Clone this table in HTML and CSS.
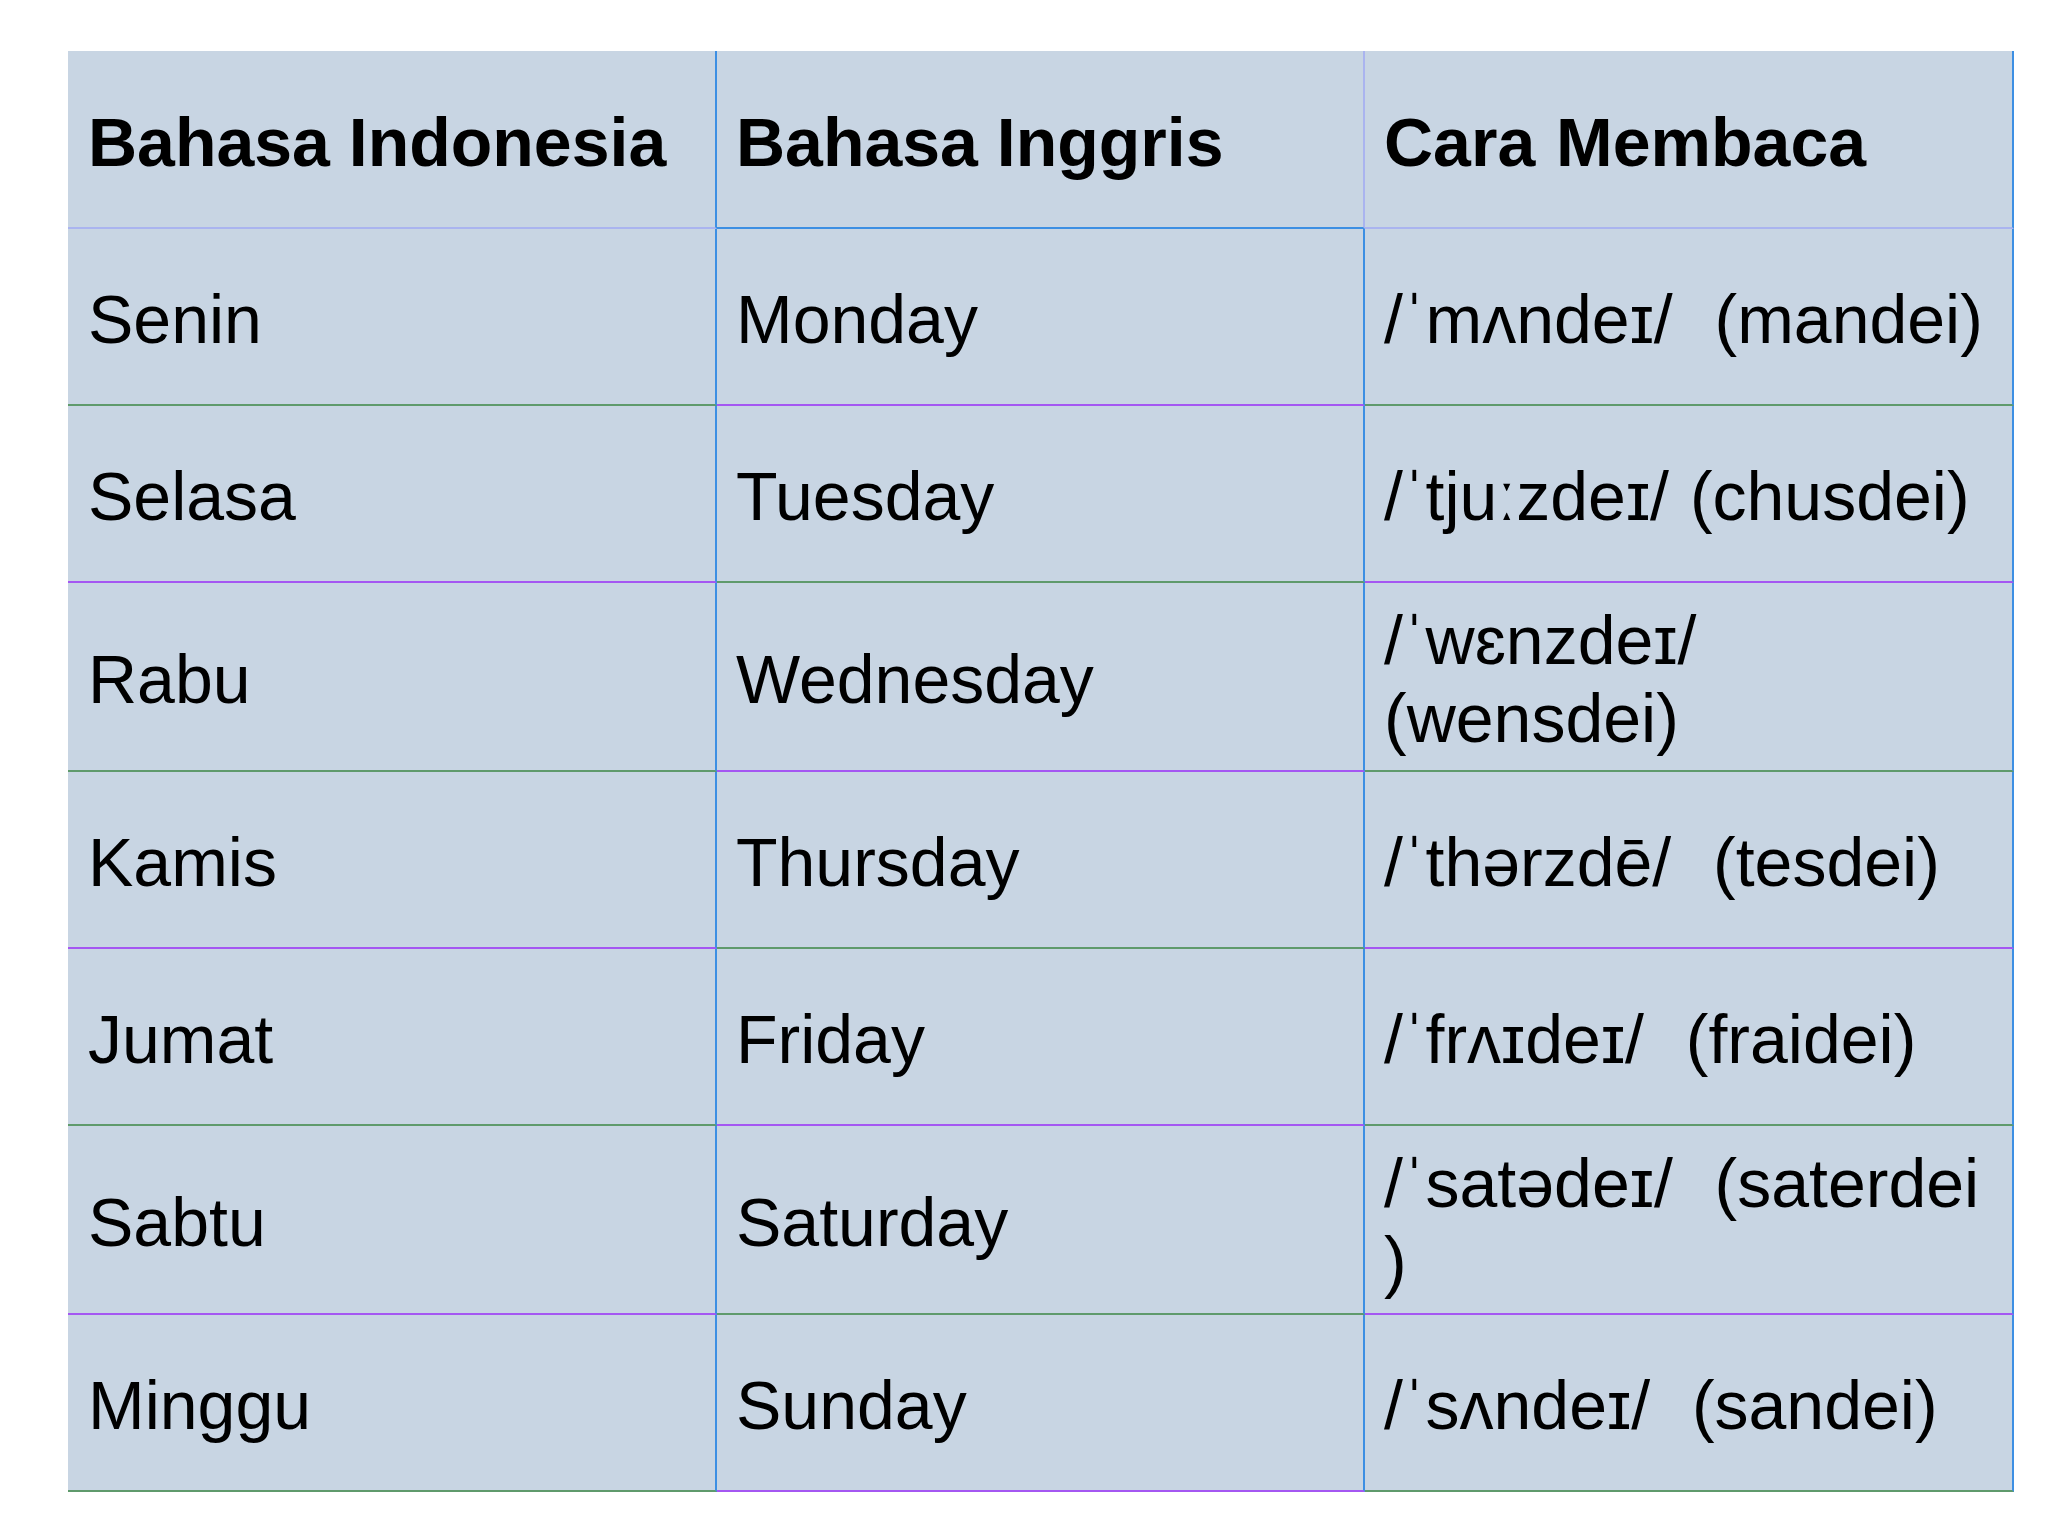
FILE: index.html
```html
<!DOCTYPE html>
<html lang="id">
<head>
<meta charset="utf-8">
<title>Nama Hari</title>
<link rel="stylesheet" href="styles.css">
</head>
<body>
<div class="table">
  <div class="cell head c1">Bahasa Indonesia</div>
  <div class="cell head c2">Bahasa Inggris</div>
  <div class="cell head c3">Cara Membaca</div>

  <div class="cell odd c1">Senin</div>
  <div class="cell odd c2">Monday</div>
  <div class="cell odd c3">/ˈmʌndeɪ/&nbsp; (mandei)</div>

  <div class="cell even c1">Selasa</div>
  <div class="cell even c2">Tuesday</div>
  <div class="cell even c3">/ˈtjuːzdeɪ/ (chusdei)</div>

  <div class="cell odd c1">Rabu</div>
  <div class="cell odd c2">Wednesday</div>
  <div class="cell odd c3">/ˈwɛnzdeɪ/<br>(wensdei)</div>

  <div class="cell even c1">Kamis</div>
  <div class="cell even c2">Thursday</div>
  <div class="cell even c3">/ˈthərzdē/&nbsp; (tesdei)</div>

  <div class="cell odd c1">Jumat</div>
  <div class="cell odd c2">Friday</div>
  <div class="cell odd c3">/ˈfrʌɪdeɪ/&nbsp; (fraidei)</div>

  <div class="cell even c1">Sabtu</div>
  <div class="cell even c2">Saturday</div>
  <div class="cell even c3">/ˈsatədeɪ/&nbsp; (saterdei<br>)</div>

  <div class="cell odd c1">Minggu</div>
  <div class="cell odd c2">Sunday</div>
  <div class="cell odd c3">/ˈsʌndeɪ/&nbsp; (sandei)</div>
</div>
</body>
</html>
```
FILE: styles.css
```css
html, body {
  margin: 0;
  padding: 0;
  background: #ffffff;
}

body {
  font-family: "Liberation Sans", Arial, sans-serif;
  color: #000000;
}

.table {
  margin: 51px 0 0 68px;
  display: grid;
  grid-template-columns: 649px 648px 649px;
  width: 1946px;
}

.cell {
  box-sizing: border-box;
  min-height: 177px;
  display: flex;
  align-items: center;
  padding: 18px 10px 13px 20px;
  background: #c8d5e3;
  font-size: 68px;
  line-height: 78px;
  white-space: nowrap;
  border-right: 2px solid #3d8fe3;
  border-bottom: 2px solid transparent;
}

.c2 {
  padding-left: 19px;
}

.c3 {
  padding-left: 19px;
  word-spacing: 2px;
}

.head {
  min-height: 178px;
  font-weight: bold;
}

.head.c1 { border-bottom-color: #aab4ef; border-right-color: #3d8fe3; }
.head.c2 { border-bottom-color: #3d8fe3; border-right-color: #aab4ef; }
.head.c3 { border-bottom-color: #aab4ef; border-right-color: #3d8fe3; }

.odd.c1, .odd.c3 { border-bottom-color: #5f9a6c; }
.odd.c2 { border-bottom-color: #a457f2; }

.even.c1, .even.c3 { border-bottom-color: #a457f2; }
.even.c2 { border-bottom-color: #5f9a6c; }
```
